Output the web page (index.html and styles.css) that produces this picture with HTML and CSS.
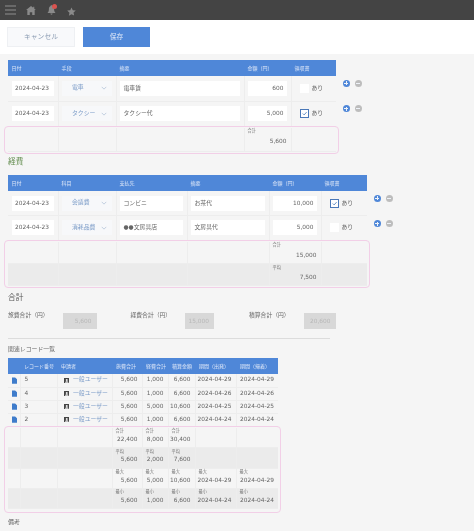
FILE: index.html
```html
<!DOCTYPE html>
<html lang="ja">
<head>
<meta charset="utf-8">
<title>編集</title>
<link rel="stylesheet" href="styles.css">
</head>
<body>
<header class="topbar">
  <svg class="ic-menu" viewBox="0 0 11 10"><path d="M0 1h11M0 5h11M0 9h11" stroke="#8d8d8d" stroke-width="1.100" fill="none"/></svg>
  <svg class="ic-home" viewBox="0 0 12 11"><path d="M6 0 0 5h1.500v6h3V7.500h3V11h3V5H12L10 3.300V.8H8.700v1.400z" fill="#8a8a8a"/></svg>
  <span class="bell">
    <svg class="ic-bell" viewBox="0 0 12 13"><path d="M6 0C4.800 0 4.500 1 4.500 1.500 2.800 2.200 2.500 4 2.500 6c0 2-1 3.500-2 4.500h11c-1-1-2-2.500-2-4.500 0-2-.3-3.800-2-4.500C7.500 1 7.200 0 6 0zM4.500 11.300a1.500 1.500 0 0 0 3 0z" fill="#8a8a8a"/></svg>
    <i class="badge"></i>
  </span>
  <svg class="ic-star" viewBox="0 0 12 12"><path d="m6 .5 1.700 3.700 4 .5-3 2.700.8 4L6 9.500l-3.500 2 .8-4-3-2.700 4-.5z" fill="#8a8a8a"/></svg>
</header>

<div class="actions">
  <button class="btn cancel">キャンセル</button>
  <button class="btn save">保存</button>
</div>

<main class="content">
  <div class="block w1">
    <table class="grid t1">
      <colgroup><col class="c50"><col class="c58"><col class="c128"><col class="c47"><col></colgroup>
      <thead><tr><th>日付</th><th>手段</th><th>摘要</th><th>金額（円）</th><th>領収書</th></tr></thead>
      <tbody>
        <tr><td><span class="inp">2024-04-23</span></td><td><span class="sel">電車<svg viewBox="0 0 8 5"><path d="m1 1 3 3 3-3" fill="none" stroke="#9fb4cf" stroke-width=".8"/></svg></span></td><td><span class="inp">電車賃</span></td><td><span class="inp num">600</span></td><td><span class="chk"></span>あり</td></tr>
        <tr><td><span class="inp">2024-04-23</span></td><td><span class="sel">タクシー<svg viewBox="0 0 8 5"><path d="m1 1 3 3 3-3" fill="none" stroke="#9fb4cf" stroke-width=".8"/></svg></span></td><td><span class="inp">タクシー代</span></td><td><span class="inp num">5,000</span></td><td><span class="chk on"><svg viewBox="0 0 10 10"><path d="m2.500 5 2 2 3.500-4" fill="none" stroke="#3f74b8" stroke-width="1.100"/></svg></span>あり</td></tr>
      </tbody>
    </table>
    <div class="rowbtns r1">
      <span class="rb"><i class="plus"></i><i class="minus"></i></span>
      <span class="rb"><i class="plus"></i><i class="minus"></i></span>
    </div>
    <div class="frame">
      <table class="grid sum">
        <colgroup><col class="c50"><col class="c58"><col class="c128"><col class="c47"><col></colgroup>
        <tr class="s24"><td></td><td></td><td></td><td><small>合計</small><b>5,600</b></td><td></td></tr>
      </table>
    </div>
  </div>

  <h2 class="sec green">経費</h2>

  <div class="block w2">
    <table class="grid t2">
      <colgroup><col class="c50"><col class="c58"><col class="c71"><col class="c82"><col class="c52"><col></colgroup>
      <thead><tr><th>日付</th><th>科目</th><th>支払先</th><th>摘要</th><th>金額（円）</th><th>領収書</th></tr></thead>
      <tbody>
        <tr><td><span class="inp">2024-04-23</span></td><td><span class="sel">会議費<svg viewBox="0 0 8 5"><path d="m1 1 3 3 3-3" fill="none" stroke="#9fb4cf" stroke-width=".8"/></svg></span></td><td><span class="inp">コンビニ</span></td><td><span class="inp">お茶代</span></td><td><span class="inp num">10,000</span></td><td><span class="chk on"><svg viewBox="0 0 10 10"><path d="m2.500 5 2 2 3.500-4" fill="none" stroke="#3f74b8" stroke-width="1.100"/></svg></span>あり</td></tr>
        <tr><td><span class="inp">2024-04-23</span></td><td><span class="sel">消耗品費<svg viewBox="0 0 8 5"><path d="m1 1 3 3 3-3" fill="none" stroke="#9fb4cf" stroke-width=".8"/></svg></span></td><td><span class="inp">●●文房具店</span></td><td><span class="inp">文房具代</span></td><td><span class="inp num">5,000</span></td><td><span class="chk"></span>あり</td></tr>
      </tbody>
    </table>
    <div class="rowbtns r2">
      <span class="rb"><i class="plus"></i><i class="minus"></i></span>
      <span class="rb"><i class="plus"></i><i class="minus"></i></span>
    </div>
    <div class="frame">
      <table class="grid sum">
        <colgroup><col class="c50"><col class="c58"><col class="c71"><col class="c82"><col class="c52"><col></colgroup>
        <tr class="s23"><td></td><td></td><td></td><td></td><td><small>合計</small><b>15,000</b></td><td></td></tr>
        <tr class="s23 alt"><td></td><td></td><td></td><td></td><td><small>平均</small><b>7,500</b></td><td></td></tr>
      </table>
    </div>
  </div>

  <h2 class="sec total">合計</h2>
  <div class="totals">
    <label class="tl">旅費合計（円）</label><span class="ro r34">5,600</span>
    <label class="tl">経費合計（円）</label><span class="ro r29">15,000</span>
    <label class="tl">積算合計（円）</label><span class="ro r32">20,600</span>
  </div>
  <hr class="rule">

  <h3 class="rel">関連レコード一覧</h3>
  <div class="block w3">
    <table class="grid t3">
      <colgroup><col class="d12"><col class="d37"><col class="d55"><col class="d30"><col class="d26"><col class="d27"><col class="d41"><col></colgroup>
      <thead><tr><th></th><th>レコード番号</th><th>申請者</th><th>旅費合計</th><th>経費合計</th><th>積算金額</th><th>期間（出発）</th><th>期間（帰着）</th></tr></thead>
      <tbody>
        <tr><td class="doc"><svg viewBox="0 0 8 10"><path d="M0 0h5l3 3v7H0z" fill="#3f7ccb"/></svg></td><td>5</td><td><span class="user"><svg viewBox="0 0 8 8"><rect width="8" height="8" fill="#444"/><circle cx="4" cy="3" r="1.500" fill="#eee"/><path d="M1.500 7c0-3 5-3 5 0z" fill="#eee"/></svg>一般ユーザー</span></td><td class="n">5,600</td><td class="n">1,000</td><td class="n">6,600</td><td class="n">2024-04-29</td><td class="n">2024-04-29</td></tr>
        <tr><td class="doc"><svg viewBox="0 0 8 10"><path d="M0 0h5l3 3v7H0z" fill="#3f7ccb"/></svg></td><td>4</td><td><span class="user"><svg viewBox="0 0 8 8"><rect width="8" height="8" fill="#444"/><circle cx="4" cy="3" r="1.500" fill="#eee"/><path d="M1.500 7c0-3 5-3 5 0z" fill="#eee"/></svg>一般ユーザー</span></td><td class="n">5,600</td><td class="n">1,000</td><td class="n">6,600</td><td class="n">2024-04-26</td><td class="n">2024-04-26</td></tr>
        <tr><td class="doc"><svg viewBox="0 0 8 10"><path d="M0 0h5l3 3v7H0z" fill="#3f7ccb"/></svg></td><td>3</td><td><span class="user"><svg viewBox="0 0 8 8"><rect width="8" height="8" fill="#444"/><circle cx="4" cy="3" r="1.500" fill="#eee"/><path d="M1.500 7c0-3 5-3 5 0z" fill="#eee"/></svg>一般ユーザー</span></td><td class="n">5,600</td><td class="n">5,000</td><td class="n">10,600</td><td class="n">2024-04-25</td><td class="n">2024-04-25</td></tr>
        <tr><td class="doc"><svg viewBox="0 0 8 10"><path d="M0 0h5l3 3v7H0z" fill="#3f7ccb"/></svg></td><td>2</td><td><span class="user"><svg viewBox="0 0 8 8"><rect width="8" height="8" fill="#444"/><circle cx="4" cy="3" r="1.500" fill="#eee"/><path d="M1.500 7c0-3 5-3 5 0z" fill="#eee"/></svg>一般ユーザー</span></td><td class="n">5,600</td><td class="n">1,000</td><td class="n">6,600</td><td class="n">2024-04-24</td><td class="n">2024-04-24</td></tr>
      </tbody>
    </table>
    <div class="frame f3">
      <table class="grid sum">
        <colgroup><col class="d12"><col class="d37"><col class="d55"><col class="d30"><col class="d26"><col class="d27"><col class="d41"><col></colgroup>
        <tr class="s20"><td></td><td></td><td></td><td><small>合計</small><b>22,400</b></td><td><small>合計</small><b>8,000</b></td><td><small>合計</small><b>30,400</b></td><td></td><td></td></tr>
        <tr class="s20 alt"><td></td><td></td><td></td><td><small>平均</small><b>5,600</b></td><td><small>平均</small><b>2,000</b></td><td><small>平均</small><b>7,600</b></td><td></td><td></td></tr>
        <tr class="s20"><td></td><td></td><td></td><td><small>最大</small><b>5,600</b></td><td><small>最大</small><b>5,000</b></td><td><small>最大</small><b>10,600</b></td><td><small>最大</small><b>2024-04-29</b></td><td><small>最大</small><b>2024-04-29</b></td></tr>
        <tr class="s20 alt"><td></td><td></td><td></td><td><small>最小</small><b>5,600</b></td><td><small>最小</small><b>1,000</b></td><td><small>最小</small><b>6,600</b></td><td><small>最小</small><b>2024-04-24</b></td><td><small>最小</small><b>2024-04-24</b></td></tr>
      </table>
    </div>
  </div>
  <div class="note">備考</div>
</main>
</body>
</html>
```

FILE: styles.css
```css
* { box-sizing: border-box; }
html, body { margin: 0; padding: 0; height: 531px; overflow: hidden; }
body { background: #fff; color: #666; font-family: "DejaVu Sans", "Noto Sans CJK JP", sans-serif; font-size: 5.850px; line-height: 1; filter: blur(.35px); }

.topbar { height: 20px; background: #444; display: flex; align-items: center; }
.ic-menu { width: 11px; height: 10px; margin-left: 5px; }
.ic-home { width: 10px; height: 9px; margin-left: 10px; }
.bell { position: relative; width: 9px; height: 12px; margin-left: 11px; margin-top: -1px; display: block; }
.ic-bell { width: 9px; height: 12px; display: block; }
.badge { position: absolute; left: 5px; top: 0; width: 5px; height: 5px; border-radius: 50%; background: #d9534f; }
.ic-star { width: 9px; height: 9px; margin-left: 11px; margin-top: 2px; }

.actions { height: 34px; padding: 7px 0 0 7px; display: flex; gap: 8px; }
.btn { width: 68px; height: 20px; border: 0; padding: 0; font: inherit; font-size: 6.800px; }
.cancel { background: #f8f9fb; color: #8a9bb2; border: 1px solid #eef0f3; }
.save { width: 67px; background: #4f87d8; color: #dfe8f8; }

.content { background: #f5f5f5; height: 477px; padding: 6px 0 0 8px; }
.block { position: relative; }
.w1 { width: 328px; }
.w2 { width: 359px; }
.w3 { width: 270px; }

.grid { border-collapse: collapse; table-layout: fixed; width: 100%; }
.grid th { background: #4f87d8; color: #dfe8f8; height: 16px; text-align: left; font-weight: 400; font-size: 5px; padding: 0 0 0 3.500px; white-space: nowrap; }
.grid td { padding: 0; border-right: 1px solid #ededed; border-bottom: 1px solid #ededed; }
.t1 td, .t2 td { height: 25px; padding: 0 3.500px; }
.t2 td { height: 24.500px; }
.grid td:last-child { border-right: 0; }

.c50 { width: 50px; } .c58 { width: 58px; } .c128 { width: 128px; } .c47 { width: 47px; }
.c71 { width: 71px; } .c82 { width: 82px; } .c52 { width: 52px; }
.d12 { width: 12px; } .d37 { width: 37px; } .d55 { width: 55px; } .d30 { width: 30px; } .d26 { width: 26px; } .d27 { width: 27px; } .d41 { width: 41px; }

.inp { display: block; height: 15px; line-height: 15px; background: #fff; padding: 0 3.500px; white-space: nowrap; }
.num { text-align: right; }
.sel { display: flex; height: 15px; align-items: center; background: #f7f8fa; color: #7c9cc8; padding: 0 5px 0 10px; white-space: nowrap; }
.sel svg { width: 6px; height: 4px; margin-left: auto; }
.chk { display: inline-flex; width: 9px; height: 9px; background: #fff; margin: 0 3px 0 4.500px; vertical-align: middle; }
.chk.on { border: 1px solid #4a78b8; }
.chk svg { width: 100%; height: 100%; }

.rowbtns { position: absolute; top: 16px; display: flex; flex-direction: column; }
.r1 { left: 334.500px; }
.r2 { left: 365.500px; }
.rb { height: 25.500px; display: flex; gap: 5px; padding-top: 3.500px; }
.rb i { width: 7px; height: 7px; border-radius: 50%; display: block; position: relative; }
.rb .plus { background: #4f87d8; }
.rb .minus { background: #bdbdbd; }
.rb i::after { content: ""; position: absolute; left: 1.500px; right: 1.500px; top: 3px; height: 1px; background: #eef2f8; }
.rb .plus::before { content: ""; position: absolute; top: 1.500px; bottom: 1.500px; left: 3px; width: 1px; background: #eef2f8; }

.frame { margin: -1px -3px 0 -4px; padding: 1px 2px 1px 3px; border: 1px solid #f2cfe7; border-radius: 4px; position: relative; }
.f3 { padding-bottom: 3px; }
.sum td { vertical-align: top; background: #f5f5f5; }
.sum .alt td { background: #ebebeb; }
.s24 td { height: 24px; }
.s23 td { height: 22px; }
.s20 td { height: 20.250px; }
.sum small { display: block; font-size: 4.200px; padding: 1.500px 0 0 3px; color: #777; height: 9px; }
.sum b { display: block; font-weight: 400; text-align: right; padding-right: 4px; white-space: nowrap; }
.s24 b, .s23 b { padding-top: 2px; }

.sec { margin: 0; font-weight: 400; font-size: 7.700px; height: 12px; line-height: 12px; }
.green { color: #5f8a4a; margin: 2px 0 7px; }
.total { margin: 4px 0 0; color: #555; }

.totals { display: flex; height: 34px; padding-top: 9px; }
.tl { width: 54.500px; font-size: 5.800px; white-space: nowrap; }
.ro { height: 16px; background: #d8d8d8; color: #b8b8b8; text-align: right; line-height: 16px; padding-right: 5px; }
.r34 { width: 34px; margin-right: 34px; }
.r29 { width: 29px; margin-right: 35px; }
.r32 { width: 32px; }
.rule { margin: 0; width: 322px; border: 0; border-top: 1px solid #dcdcdc; }
.rel { margin: 6px 0 5px; height: 8px; font-size: 5.900px; font-weight: 400; line-height: 8px; }

.t3 td { height: 13px; padding: 0 0 0 4px; }
.t3 th { padding-left: 4px; }
.doc svg { width: 5px; height: 7px; display: block; }
.user { display: flex; align-items: center; gap: 4px; color: #7c9cc8; white-space: nowrap; padding-left: 2px; }
.user svg { width: 5.500px; height: 5.500px; }
.t3 .n { text-align: right; padding: 0 4px 0 0; white-space: nowrap; }
.note { margin-top: 4px; font-size: 6px; height: 10px; line-height: 10px; }
```
